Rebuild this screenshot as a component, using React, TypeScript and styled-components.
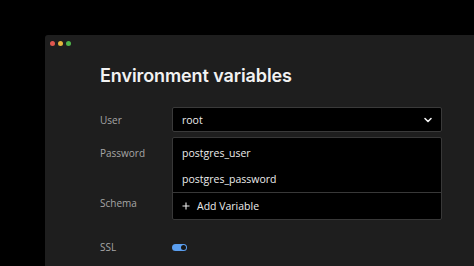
import styled, {createGlobalStyle} from "styled-components";

const GlobalStyle = createGlobalStyle`
  html, body {
    margin: 0;
    background: #000;
    height: 100%;
    overflow: hidden;
  }

  body {
    font-family: "Open Sans", "Noto Sans", sans-serif;
  }
`

const Page = styled.div`
  width: 474px;
  height: 266px;
  padding: 35px 0 0 45px;
  box-sizing: border-box;
`

const Window = styled.div`
  position: relative;
  height: 231px;
  background: #1e1e1e;
  border-top-left-radius: 3px;
`

const TitleBar = styled.div`
  display: flex;
  gap: 3px;
  padding: 6px 0 0 5px;
`

const Dot = styled.span<{ color: string }>`
  width: 5px;
  height: 5px;
  border-radius: 50%;
  background: ${({color}) => color};
`

const Content = styled.div`
  padding: 18px 0 0 55px;
`

const Title = styled.h1`
  margin: 0 0 19px;
  font-family: Inter, "Noto Sans", sans-serif;
  font-weight: 600;
  font-size: 18px;
  line-height: 24px;
  color: #f2f2f2;
  letter-spacing: -0.1px;
`

const Row = styled.div<{ top: number; height: number }>`
  display: grid;
  grid-template-columns: 72px 270px;
  align-items: center;
  margin-top: ${({top}) => top}px;
  height: ${({height}) => height}px;
`

const Label = styled.span`
  font-size: 10px;
  color: #a6a6a6;
`

const Field = styled.div`
  display: flex;
  align-items: center;
  justify-content: space-between;
  height: 25px;
  box-sizing: border-box;
  padding: 0 8px 0 9px;
  background: #000;
  border: 1px solid #3a3a3a;
  border-radius: 2px;
  font-size: 10.5px;
  color: #ececec;
`

const Toggle = styled.span<{ on: boolean }>`
  display: flex;
  align-items: center;
  justify-content: ${({on}) => on ? 'flex-end' : 'flex-start'};
  width: 15px;
  height: 7px;
  padding: 0 1px;
  box-sizing: border-box;
  border-radius: 4px;
  background: ${({on}) => on ? '#5b9ff0' : '#555'};

  &::after {
    content: "";
    width: 5px;
    height: 5px;
    border-radius: 50%;
    background: #161616;
  }
`

const Menu = styled.ul`
  position: absolute;
  left: 127px;
  top: 102px;
  width: 270px;
  margin: 0;
  padding: 2px 0 0;
  list-style: none;
  box-sizing: border-box;
  background: #000;
  border: 1px solid #383838;
  border-radius: 2px;
`

const Item = styled.li<{ divided?: boolean }>`
  display: flex;
  align-items: center;
  gap: 7px;
  height: 26px;
  padding: 0 9px;
  font-size: 10.5px;
  color: #ececec;
  border-top: ${({divided}) => divided ? '1px solid #383838' : 'none'};
`

const Chevron = () => (
    <svg width="10" height="10" viewBox="0 0 10 10">
        <path d="M2 3.5 L5 6.5 L8 3.5" fill="none" stroke="#f2f2f2" strokeWidth="1.6"
              strokeLinecap="round" strokeLinejoin="round"/>
    </svg>
)

const Plus = () => (
    <svg width="8" height="8" viewBox="0 0 8 8">
        <path d="M4 0.5 V7.5 M0.5 4 H7.5" stroke="#ececec" strokeWidth="1.1"/>
    </svg>
)

export default function App() {
    return (
        <Page>
            <GlobalStyle/>
            <Window>
                <TitleBar>
                    <Dot color="#e0574f"/>
                    <Dot color="#e6b53d"/>
                    <Dot color="#4fb54b"/>
                </TitleBar>
                <Content>
                    <Title>Environment variables</Title>
                    <Row top={0} height={25}>
                        <Label>User</Label>
                        <Field>root<Chevron/></Field>
                    </Row>
                    <Row top={8} height={25}>
                        <Label>Password</Label>
                    </Row>
                    <Row top={25} height={25}>
                        <Label>Schema</Label>
                    </Row>
                    <Row top={22} height={20}>
                        <Label>SSL</Label>
                        <Toggle on/>
                    </Row>
                </Content>
                <Menu>
                    <Item>postgres_user</Item>
                    <Item>postgres_password</Item>
                    <Item divided><Plus/>Add Variable</Item>
                </Menu>
            </Window>
        </Page>
    )
}
